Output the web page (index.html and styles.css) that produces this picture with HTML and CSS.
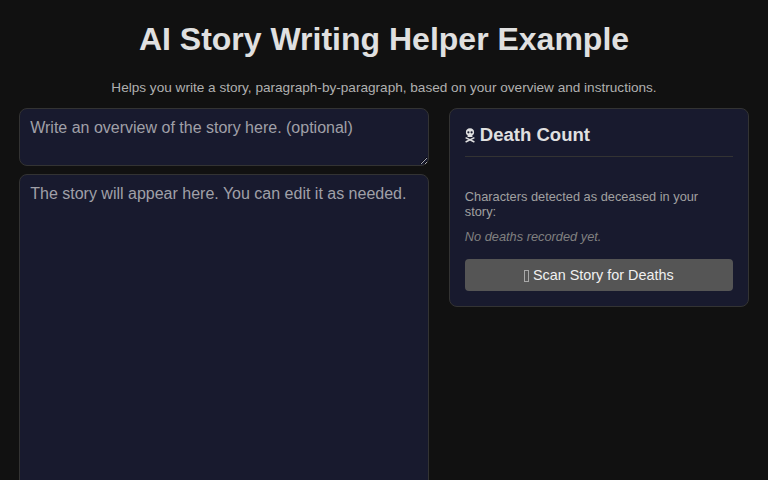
FILE: index.html
```html
<!DOCTYPE html>
<html lang="en">
<head>
<meta charset="utf-8">
<title>AI Story Writing Helper Example</title>
<link rel="stylesheet" href="styles.css">
</head>
<body>
<div class="page">
  <h1 class="title">AI Story Writing Helper Example</h1>
  <p class="subtitle">Helps you write a story, paragraph-by-paragraph, based on your overview and instructions.</p>
  <div class="columns">
    <main class="editor">
      <textarea class="field overview" placeholder="Write an overview of the story here. (optional)"></textarea>
      <textarea class="field story" placeholder="The story will appear here. You can edit it as needed."></textarea>
    </main>
    <aside class="panel">
      <h2 class="panel-title"><svg class="skull" viewBox="0 0 10 15" width="10" height="15" aria-hidden="true"><path class="skull-head" d="M5 .3C2.300.3.900 2 .900 4.200c0 1.500.7 2.500 1.700 3.100v1.700h4.800V7.300c1-.6 1.700-1.600 1.700-3.100C9.100 2 7.700.3 5 .3z"/><circle class="skull-eye" cx="3.400" cy="4.300" r="1.100"/><circle class="skull-eye" cx="6.600" cy="4.300" r="1.100"/><path class="skull-bones" d="M.6 9.600l8.800 4.400M9.400 9.600L.6 14"/></svg> Death Count</h2>
      <p class="panel-text">Characters detected as deceased in your story:</p>
      <p class="panel-empty">No deaths recorded yet.</p>
      <button class="scan" type="button"><span class="tofu"></span> Scan Story for Deaths</button>
    </aside>
  </div>
</div>
</body>
</html>
```
FILE: styles.css
```css
* { box-sizing: border-box; }
html, body { margin: 0; height: 100%; }
body {
  background: #111111;
  color: #e0e0e0;
  font-family: "Liberation Sans", Arial, sans-serif;
  overflow: hidden;
}
.page { width: 95%; margin: 0 auto; height: 480px; overflow: hidden; }
.title {
  margin: 0;
  padding-top: 21px;
  font-size: 32px;
  line-height: 37px;
  font-weight: 700;
  text-align: center;
}
.subtitle {
  margin: 22px 0 0;
  font-size: 13.6px;
  line-height: 16px;
  color: #b0b0b0;
  text-align: center;
}
.columns { display: flex; gap: 20px; margin-top: 12px; align-items: flex-start; }
.editor { flex: 1; min-width: 0; display: flex; flex-direction: column; gap: 8px; }
.field {
  display: block;
  width: 100%;
  padding: 10px;
  background: #181a2e;
  color: #e0e0e0;
  border: 1px solid #333333;
  border-radius: 8px;
  font-family: "Liberation Sans", Arial, sans-serif;
  font-size: 16px;
  line-height: 18px;
}
.field::placeholder { color: #a0a0a8; opacity: 1; }
.overview { height: 58px; resize: vertical; }
.story { height: 500px; resize: none; }
.panel {
  flex: 0 0 300px;
  padding: 15px;
  background: #181a2e;
  border: 1px solid #333333;
  border-radius: 8px;
}
.panel-title {
  display: flex;
  align-items: center;
  gap: 5px;
  height: 33px;
  margin: 0;
  padding-bottom: 10px;
  border-bottom: 1px solid #333333;
  font-size: 18.56px;
  line-height: 22px;
  font-weight: 700;
  color: #e0e0e0;
}
.skull { display: block; flex: none; }
.skull-head { fill: #e0e0e0; }
.skull-eye { fill: #181a2e; }
.skull-bones { fill: none; stroke: #e0e0e0; stroke-width: 1.5; }
.panel-text {
  margin: 32px 0 0;
  font-size: 12.8px;
  line-height: 15px;
  color: #a0a0a0;
}
.panel-empty {
  margin: 10px 0 0;
  font-size: 12.8px;
  line-height: 15px;
  font-style: italic;
  color: #808080;
}
.scan {
  display: block;
  width: 100%;
  height: 32px;
  margin-top: 15px;
  padding: 0;
  background: #555555;
  color: #f0f0f0;
  border: 0;
  border-radius: 4px;
  font-family: "Liberation Sans", Arial, sans-serif;
  font-size: 14.4px;
}
.tofu {
  display: inline-block;
  width: 5px;
  height: 12px;
  border: 1px solid #a8a8a8;
  vertical-align: -2px;
}
```
